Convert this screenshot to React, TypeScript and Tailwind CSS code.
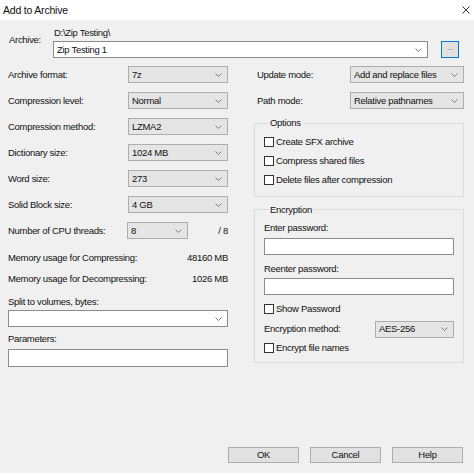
import React from 'react';

function Chevron() {
  return (
    <svg width="7" height="4" viewBox="0 0 7 4" className="shrink-0">
      <path d="M0.5 0.5 L3.5 3.5 L6.5 0.5" fill="none" stroke="#6f6f6f" strokeWidth="0.9" />
    </svg>
  );
}

function DropList({ value, className = '' }: { value: string; className?: string }) {
  return (
    <div
      className={`flex h-[17px] items-center justify-between border border-[#adadad] bg-[#e5e5e5] pl-[3px] pr-[5px] ${className}`}
    >
      <span>{value}</span>
      <Chevron />
    </div>
  );
}

function EditCombo({ value = '', className = '' }: { value?: string; className?: string }) {
  return (
    <div
      className={`flex h-[17px] items-center justify-between border border-[#8c8c8c] bg-white pl-[3px] pr-[5px] ${className}`}
    >
      <span>{value}</span>
      <Chevron />
    </div>
  );
}

function Row({ label, children }: { label: string; children: React.ReactNode }) {
  return (
    <div className="flex h-[17px] items-center justify-between">
      <span>{label}</span>
      {children}
    </div>
  );
}

function Check({ label, className = '' }: { label: string; className?: string }) {
  return (
    <div className={`flex h-[13px] items-center gap-[2px] ${className}`}>
      <span className="h-[10px] w-[10px] border border-[#333333] bg-white" />
      <span>{label}</span>
    </div>
  );
}

function Button({ label }: { label: string }) {
  return (
    <div className="flex h-[16px] w-[71px] items-center justify-center border border-[#adadad] bg-[#e1e1e1]">
      {label}
    </div>
  );
}

export default function App() {
  return (
    <div className="h-[475px] w-[474px] overflow-hidden bg-white font-['Liberation_Sans',Arial,sans-serif] text-[9.5px] leading-[12px] tracking-[-0.3px] text-[#111111]">
      {/* title bar */}
      <div className="flex h-[20px] items-center justify-between pl-[3px] pr-[4px]">
        <span className="text-[10.5px] tracking-[-0.2px]">Add to Archive</span>
        <svg width="8" height="8" viewBox="0 0 8 8">
          <path d="M0.5 0.5 L7.5 7.5 M7.5 0.5 L0.5 7.5" stroke="#222" strokeWidth="0.9" />
        </svg>
      </div>

      <div className="flex h-[453px] flex-col bg-[#f0f0f0] pl-[8px] pr-[10px]">
        {/* archive */}
        <div className="flex pt-[7px]">
          <span className="w-[45px] pl-[1px] pt-[7px]">Archive:</span>
          <div className="flex w-[375px] flex-col">
            <span className="pl-[1px]">D:\Zip Testing\</span>
            <EditCombo value="Zip Testing 1" className="mt-[2px]" />
          </div>
          <div className="ml-[13px] mt-[14px] flex h-[17px] w-[18px] items-center justify-center border border-[#0078d7] bg-[#e1e1e1] pb-[3px] text-[8px] text-[#666666]">
            ...
          </div>
        </div>

        <div className="mt-[8px] flex gap-[26px]">
          {/* left column */}
          <div className="flex w-[220px] flex-col">
            <div className="flex flex-col gap-[9px]">
              <Row label="Archive format:">
                <DropList value="7z" className="w-[100px]" />
              </Row>
              <Row label="Compression level:">
                <DropList value="Normal" className="w-[100px]" />
              </Row>
              <Row label="Compression method:">
                <DropList value="LZMA2" className="w-[100px]" />
              </Row>
              <Row label="Dictionary size:">
                <DropList value="1024 MB" className="w-[100px]" />
              </Row>
              <Row label="Word size:">
                <DropList value="273" className="w-[100px]" />
              </Row>
              <Row label="Solid Block size:">
                <DropList value="4 GB" className="w-[100px]" />
              </Row>
              <div className="flex h-[17px] items-center">
                <span className="w-[119px]">Number of CPU threads:</span>
                <DropList value="8" className="w-[61px]" />
                <span className="ml-auto">/ 8</span>
              </div>
            </div>

            <div className="mt-[13px] flex justify-between">
              <span>Memory usage for Compressing:</span>
              <span>48160 MB</span>
            </div>
            <div className="mt-[9px] flex justify-between">
              <span>Memory usage for Decompressing:</span>
              <span>1026 MB</span>
            </div>

            <span className="mt-[11px]">Split to volumes, bytes:</span>
            <EditCombo className="mt-[2px]" />
            <span className="mt-[6px]">Parameters:</span>
            <div className="mt-[4px] h-[18px] border border-[#8c8c8c] bg-white" />
          </div>

          {/* right column */}
          <div className="flex w-[210px] flex-col">
            <div className="flex flex-col gap-[9px]">
              <div className="flex h-[17px] items-center justify-between pl-[3px]">
                <span>Update mode:</span>
                <DropList value="Add and replace files" className="w-[114px]" />
              </div>
              <div className="flex h-[17px] items-center justify-between pl-[3px]">
                <span>Path mode:</span>
                <DropList value="Relative pathnames" className="w-[114px]" />
              </div>
            </div>

            <fieldset className="mt-[8px] border border-[#dcdcdc] px-[9px] pb-[9px]">
              <legend className="ml-[4px] px-[2px]">Options</legend>
              <div className="flex flex-col gap-[6px] pt-[6.5px]">
                <Check label="Create SFX archive" />
                <Check label="Compress shared files" />
                <Check label="Delete files after compression" />
              </div>
            </fieldset>

            <fieldset className="mt-[7px] flex flex-col border border-[#dcdcdc] px-[9px] pb-[8px]">
              <legend className="ml-[4px] px-[2px]">Encryption</legend>
              <span className="mt-[6px] block">Enter password:</span>
              <div className="mt-[4px] h-[17px] border border-[#8c8c8c] bg-white" />
              <span className="mt-[8px] block">Reenter password:</span>
              <div className="mt-[3px] h-[17px] border border-[#8c8c8c] bg-white" />
              <Check label="Show Password" className="mt-[7.5px]" />
              <div className="mt-[6px] flex h-[16px] items-center justify-between">
                <span>Encryption method:</span>
                <DropList value="AES-256" className="h-[16px] w-[79px]" />
              </div>
              <Check label="Encrypt file names" className="mt-[4px]" />
            </fieldset>
          </div>
        </div>

        {/* footer */}
        <div className="mt-auto mr-[1px] flex justify-end gap-[11px] pb-[10px]">
          <Button label="OK" />
          <Button label="Cancel" />
          <Button label="Help" />
        </div>
      </div>
    </div>
  );
}
